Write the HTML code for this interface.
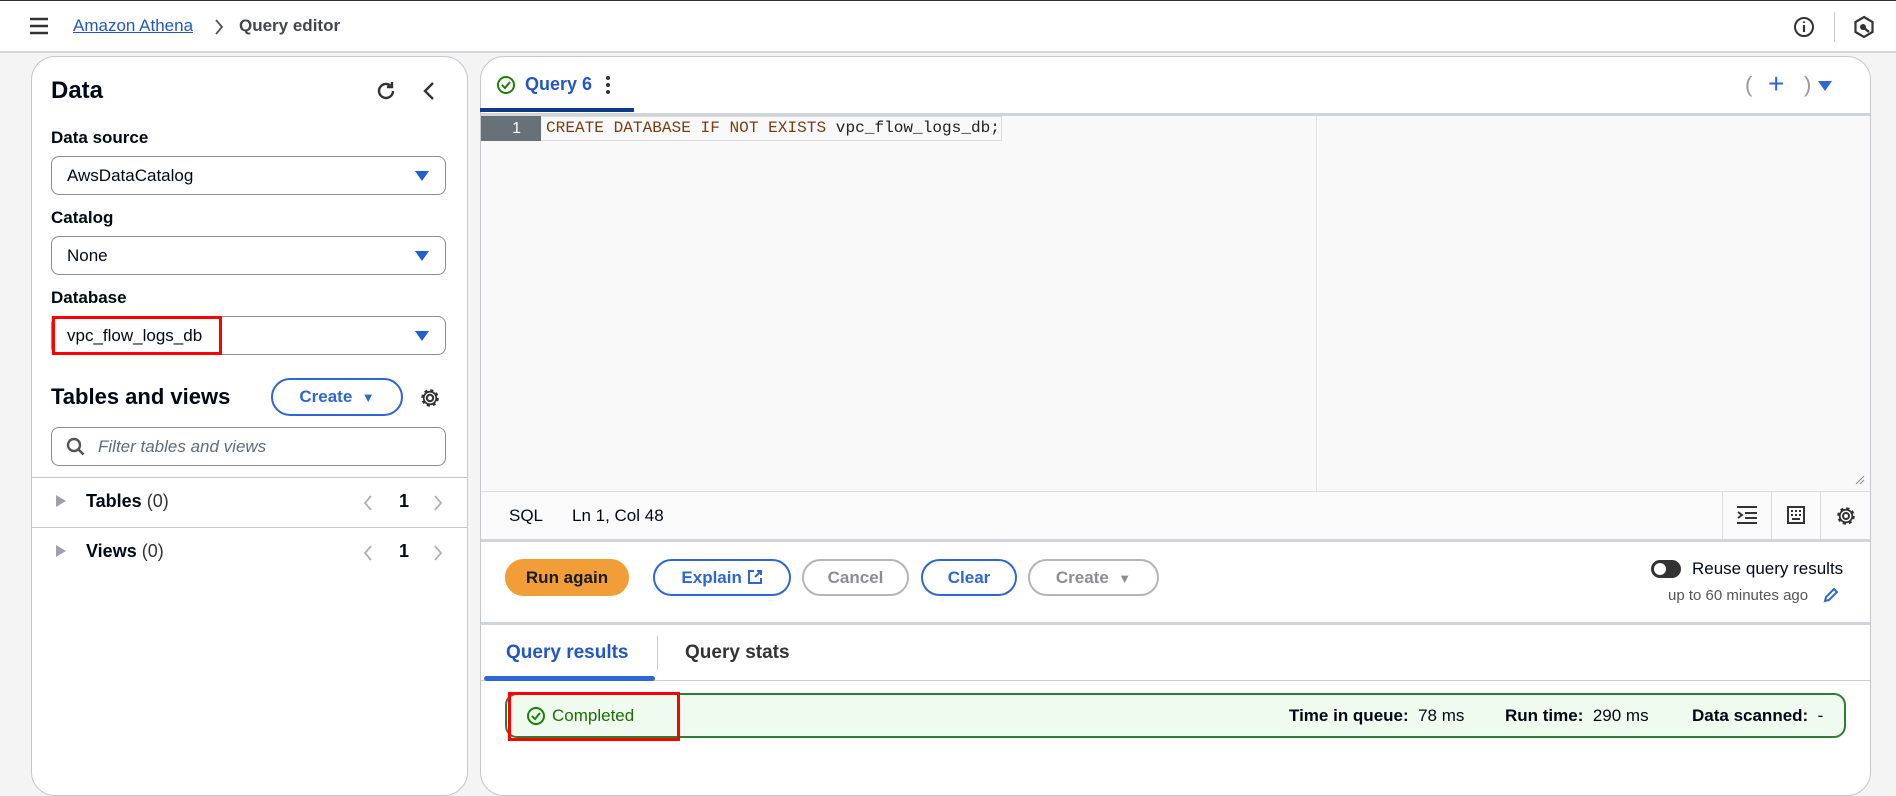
<!DOCTYPE html>
<html><head><meta charset="utf-8"><style>
*{box-sizing:border-box;margin:0;padding:0}
body{width:1896px;height:774px;overflow:hidden;background:#f4f4f4;font-family:"Liberation Sans",sans-serif;color:#000716;position:relative;font-size:17px}
.a{position:absolute}
.hdr{left:0;top:0;width:1896px;height:53px;background:#fff;border-top:1px solid #333;border-bottom:2px solid #d5d7da}
.panel{background:#fff;border:1px solid #c6c6cd;border-radius:24px}
.lbl{font-weight:bold;font-size:17px}
.sel{border:1px solid #8c8c94;border-radius:8px;height:39px;left:51px;width:395px;background:#fff;padding-left:15px;line-height:37px;font-size:17px}
.tri{position:absolute;right:16px;top:14px;width:0;height:0;border-left:7px solid transparent;border-right:7px solid transparent;border-top:10px solid #2260d5}
.btn{border:2px solid #2d66d8;border-radius:20px;height:37px;top:559px;text-align:center;line-height:33px;font-weight:bold;color:#2d66d8;font-size:17px;background:#fff}
.dis{border-color:#b4b4bb;color:#8d8d94}
.mono{font-family:"Liberation Mono",monospace}
</style></head><body>
<div class="a hdr"></div>
<svg class="a" style="left:29px;top:17px" width="20" height="18"><path d="M1 2h18M1 9h18M1 16h18" stroke="#333" stroke-width="2.4"/></svg>
<div class="a" style="left:73px;top:16px;font-size:17px;color:#2256c7;text-decoration:underline">Amazon Athena</div>
<svg class="a" style="left:213px;top:18px" width="12" height="18"><path d="M3 2l6 7-6 7" stroke="#555" stroke-width="1.8" fill="none"/></svg>
<div class="a" style="left:239px;top:16px;font-weight:bold;color:#414750">Query editor</div>
<svg class="a" style="left:1792px;top:15px" width="24" height="24"><circle cx="12" cy="12" r="9" stroke="#333" stroke-width="2" fill="none"/><path d="M12 10v7M12 6.5v1.5" stroke="#333" stroke-width="2.2"/></svg>
<div class="a" style="left:1834px;top:12px;width:1px;height:30px;background:#ccc"></div>
<svg class="a" style="left:1852px;top:15px" width="24" height="24"><path d="M12 2l8.5 5v10L12 22 3.5 17V7z" stroke="#333" stroke-width="2.2" fill="none"/><circle cx="11" cy="12" r="3" fill="#333"/><path d="M12 13l5 4" stroke="#333" stroke-width="2.4"/></svg>

<div class="a panel" style="left:31px;top:56px;width:437px;height:740px"></div>
<div class="a" style="left:51px;top:77px;font-size:24px;font-weight:bold">Data</div>
<svg class="a" style="left:374px;top:79px" width="24" height="24"><path d="M19 12a7 7 0 1 1-2.5-5.4" stroke="#333" stroke-width="2.4" fill="none"/><path d="M18 3v5h-5" stroke="#333" stroke-width="2.4" fill="none"/></svg>
<svg class="a" style="left:421px;top:80px" width="16" height="22"><path d="M12 3l-8 8 8 8" stroke="#333" stroke-width="2.4" fill="none"/></svg>
<div class="a lbl" style="left:51px;top:128px">Data source</div>
<div class="a sel" style="top:156px">AwsDataCatalog<span class="tri"></span></div>
<div class="a lbl" style="left:51px;top:208px">Catalog</div>
<div class="a sel" style="top:236px">None<span class="tri"></span></div>
<div class="a lbl" style="left:51px;top:288px">Database</div>
<div class="a sel" style="top:316px">vpc_flow_logs_db<span class="tri"></span></div>
<div class="a" style="left:52px;top:316px;width:170px;height:39px;border:3px solid #f00"></div>
<div class="a" style="left:51px;top:384px;font-size:22px;font-weight:bold">Tables and views</div>
<div class="a btn" style="left:271px;top:378px;width:132px;height:38px;line-height:34px">Create&nbsp;&nbsp;<span style="font-size:13px">▼</span></div>
<svg class="a" style="left:419px;top:387px" width="22" height="22"><circle cx="11" cy="11" r="3.2" stroke="#333" stroke-width="2" fill="none"/><circle cx="11" cy="11" r="7.5" stroke="#333" stroke-width="2.6" stroke-dasharray="3 2.9" fill="none"/><circle cx="11" cy="11" r="6.3" stroke="#333" stroke-width="1.8" fill="none"/></svg>
<div class="a sel" style="top:427px;height:39px;padding-left:46px;font-style:italic;color:#5f6b7a">Filter tables and views</div>
<svg class="a" style="left:66px;top:437px" width="20" height="20"><circle cx="8" cy="8" r="6" stroke="#555" stroke-width="2.4" fill="none"/><path d="M12.5 12.5l5 5" stroke="#555" stroke-width="2.6"/></svg>
<div class="a" style="left:31px;top:477px;width:437px;height:1px;background:#c6c6cd"></div>
<div class="a" style="left:31px;top:527px;width:437px;height:1px;background:#c6c6cd"></div>
<div class="a" style="left:56px;top:495px;width:0;height:0;border-top:6px solid transparent;border-bottom:6px solid transparent;border-left:10px solid #a0a0a8"></div>
<div class="a" style="left:56px;top:545px;width:0;height:0;border-top:6px solid transparent;border-bottom:6px solid transparent;border-left:10px solid #a0a0a8"></div>
<div class="a" style="left:86px;top:491px;font-size:18px"><b>Tables</b> <span style="color:#333">(0)</span></div>
<div class="a" style="left:86px;top:541px;font-size:18px"><b>Views</b> <span style="color:#333">(0)</span></div>
<svg class="a" style="left:362px;top:494px" width="12" height="18"><path d="M9 2L3 9l6 7" stroke="#b0b0b6" stroke-width="1.8" fill="none"/></svg>
<div class="a" style="left:399px;top:491px;font-size:18px;font-weight:bold">1</div>
<svg class="a" style="left:432px;top:494px" width="12" height="18"><path d="M3 2l6 7-6 7" stroke="#b0b0b6" stroke-width="1.8" fill="none"/></svg>
<svg class="a" style="left:362px;top:544px" width="12" height="18"><path d="M9 2L3 9l6 7" stroke="#b0b0b6" stroke-width="1.8" fill="none"/></svg>
<div class="a" style="left:399px;top:541px;font-size:18px;font-weight:bold">1</div>
<svg class="a" style="left:432px;top:544px" width="12" height="18"><path d="M3 2l6 7-6 7" stroke="#b0b0b6" stroke-width="1.8" fill="none"/></svg>

<div class="a panel" style="left:480px;top:56px;width:1391px;height:740px"></div>
<svg class="a" style="left:496px;top:75px" width="20" height="20"><circle cx="10" cy="10" r="8" stroke="#1d8102" stroke-width="2" fill="none"/><path d="M6 10l3 3 5-6" stroke="#1d8102" stroke-width="2" fill="none"/></svg>
<div class="a" style="left:525px;top:74px;font-weight:bold;color:#2256c7;font-size:18px">Query 6</div>
<svg class="a" style="left:605px;top:74px" width="6" height="22"><circle cx="3" cy="4" r="2" fill="#333"/><circle cx="3" cy="11" r="2" fill="#333"/><circle cx="3" cy="18" r="2" fill="#333"/></svg>
<div class="a" style="left:480px;top:108px;width:154px;height:4px;background:#0f3a8a"></div>
<div class="a" style="left:1745px;top:72px;font-size:22px;color:#999">(</div>
<div class="a" style="left:1768px;top:68px;font-size:28px;color:#2d66d8">+</div>
<div class="a" style="left:1804px;top:72px;font-size:22px;color:#999">)</div>
<div class="a" style="left:1818px;top:81px;width:0;height:0;border-left:7px solid transparent;border-right:7px solid transparent;border-top:10px solid #2d66d8"></div>
<div class="a" style="left:481px;top:113px;width:1389px;height:378px;background:#f9f9f9;border-top:3px solid #d1d5db"></div>
<div class="a" style="left:541px;top:116px;width:461px;height:25px;border:1px solid #dcdcdc;border-left:none"></div>
<div class="a" style="left:1316px;top:116px;width:1px;height:375px;background:#e4e4e4"></div>
<div class="a" style="left:481px;top:116px;width:60px;height:25px;background:#687078;color:#fff;text-align:right;padding-right:20px;line-height:25px;font-size:16px">1</div>
<div class="a mono" style="left:546px;top:116px;line-height:25px;font-size:16.1px;color:#7b3c12"><span>CREATE DATABASE</span> <span>IF NOT EXISTS</span> <span style="color:#222">vpc_flow_logs_db;</span></div>
<svg class="a" style="left:1853px;top:473px" width="12" height="12"><path d="M11 3L3 11M11 7L7 11" stroke="#888" stroke-width="1"/></svg>
<div class="a" style="left:481px;top:491px;width:1389px;height:51px;background:#fafafa;border-top:1px solid #ddd;border-bottom:3px solid #d1d5db"></div>
<div class="a" style="left:509px;top:506px">SQL</div>
<div class="a" style="left:572px;top:506px">Ln 1, Col 48</div>
<div class="a" style="left:1722px;top:492px;width:1px;height:47px;background:#ddd"></div>
<div class="a" style="left:1771px;top:492px;width:1px;height:47px;background:#ddd"></div>
<div class="a" style="left:1820px;top:492px;width:1px;height:47px;background:#ddd"></div>
<svg class="a" style="left:1736px;top:505px" width="22" height="20"><path d="M1 2h20M9 8h12M9 13h12M1 18h20M2 7l4 3-4 3" stroke="#333" stroke-width="2" fill="none"/></svg>
<svg class="a" style="left:1786px;top:505px" width="20" height="20"><rect x="2" y="2" width="16" height="16" stroke="#333" stroke-width="2" fill="none"/><path d="M5 6h2M9 6h2M13 6h2M5 10h2M9 10h2M13 10h2M6 14h8" stroke="#333" stroke-width="2"/></svg>
<svg class="a" style="left:1835px;top:505px" width="22" height="22"><circle cx="11" cy="11" r="3" stroke="#333" stroke-width="2" fill="none"/><circle cx="11" cy="11" r="7.5" stroke="#333" stroke-width="2.6" stroke-dasharray="3 2.9" fill="none"/><circle cx="11" cy="11" r="6.3" stroke="#333" stroke-width="1.8" fill="none"/></svg>
<div class="a btn" style="left:505px;width:124px;background:#f19e38;border-color:#f19e38;color:#1a1a1a">Run again</div>
<div class="a btn" style="left:653px;width:138px">Explain <svg width="16" height="16" style="vertical-align:-2px"><path d="M7 2H2v12h12V9M10 2h4v4M14 2L8 8" stroke="#2d66d8" stroke-width="2" fill="none"/></svg></div>
<div class="a btn dis" style="left:802px;width:107px">Cancel</div>
<div class="a btn" style="left:921px;width:96px">Clear</div>
<div class="a btn dis" style="left:1028px;width:131px">Create&nbsp; <span style="font-size:13px">▼</span></div>
<div class="a" style="left:1651px;top:560px;width:30px;height:18px;border-radius:9px;background:#333"></div>
<div class="a" style="left:1654px;top:563px;width:12px;height:12px;border-radius:6px;background:#fff"></div>
<div class="a" style="left:1692px;top:559px">Reuse query results</div>
<div class="a" style="left:1668px;top:587px;font-size:15px;color:#555">up to 60 minutes ago</div>
<svg class="a" style="left:1822px;top:586px" width="16" height="18"><path d="M3 15l1-4 8-8 3 3-8 8z" stroke="#2d66d8" stroke-width="2" fill="none"/></svg>
<div class="a" style="left:481px;top:622px;width:1389px;height:3px;background:#d1d5db"></div>
<div class="a" style="left:506px;top:642px;font-weight:bold;color:#2256c7;font-size:19px">Query results</div>
<div class="a" style="left:657px;top:636px;width:1px;height:34px;background:#ccc"></div>
<div class="a" style="left:685px;top:642px;font-weight:bold;color:#333;font-size:19px">Query stats</div>
<div class="a" style="left:481px;top:680px;width:1389px;height:1px;background:#ccc"></div>
<div class="a" style="left:484px;top:676px;width:171px;height:5px;background:#2d66d8;border-radius:3px"></div>
<div class="a" style="left:505px;top:693px;width:1341px;height:45px;background:#effbef;border:2px solid #2e7d32;border-radius:12px"></div>
<svg class="a" style="left:526px;top:706px" width="20" height="20"><circle cx="10" cy="10" r="8" stroke="#1d8102" stroke-width="2" fill="none"/><path d="M6 10l3 3 5-6" stroke="#1d8102" stroke-width="2" fill="none"/></svg>
<div class="a" style="left:552px;top:706px;color:#1d6e02">Completed</div>
<div class="a" style="left:508px;top:692px;width:172px;height:49px;border:3px solid #f00"></div>
<div class="a" style="left:1289px;top:706px"><b>Time in queue:</b>&nbsp; 78 ms</div>
<div class="a" style="left:1505px;top:706px"><b>Run time:</b>&nbsp; 290 ms</div>
<div class="a" style="left:1692px;top:706px"><b>Data scanned:</b>&nbsp; -</div>
</body></html>
